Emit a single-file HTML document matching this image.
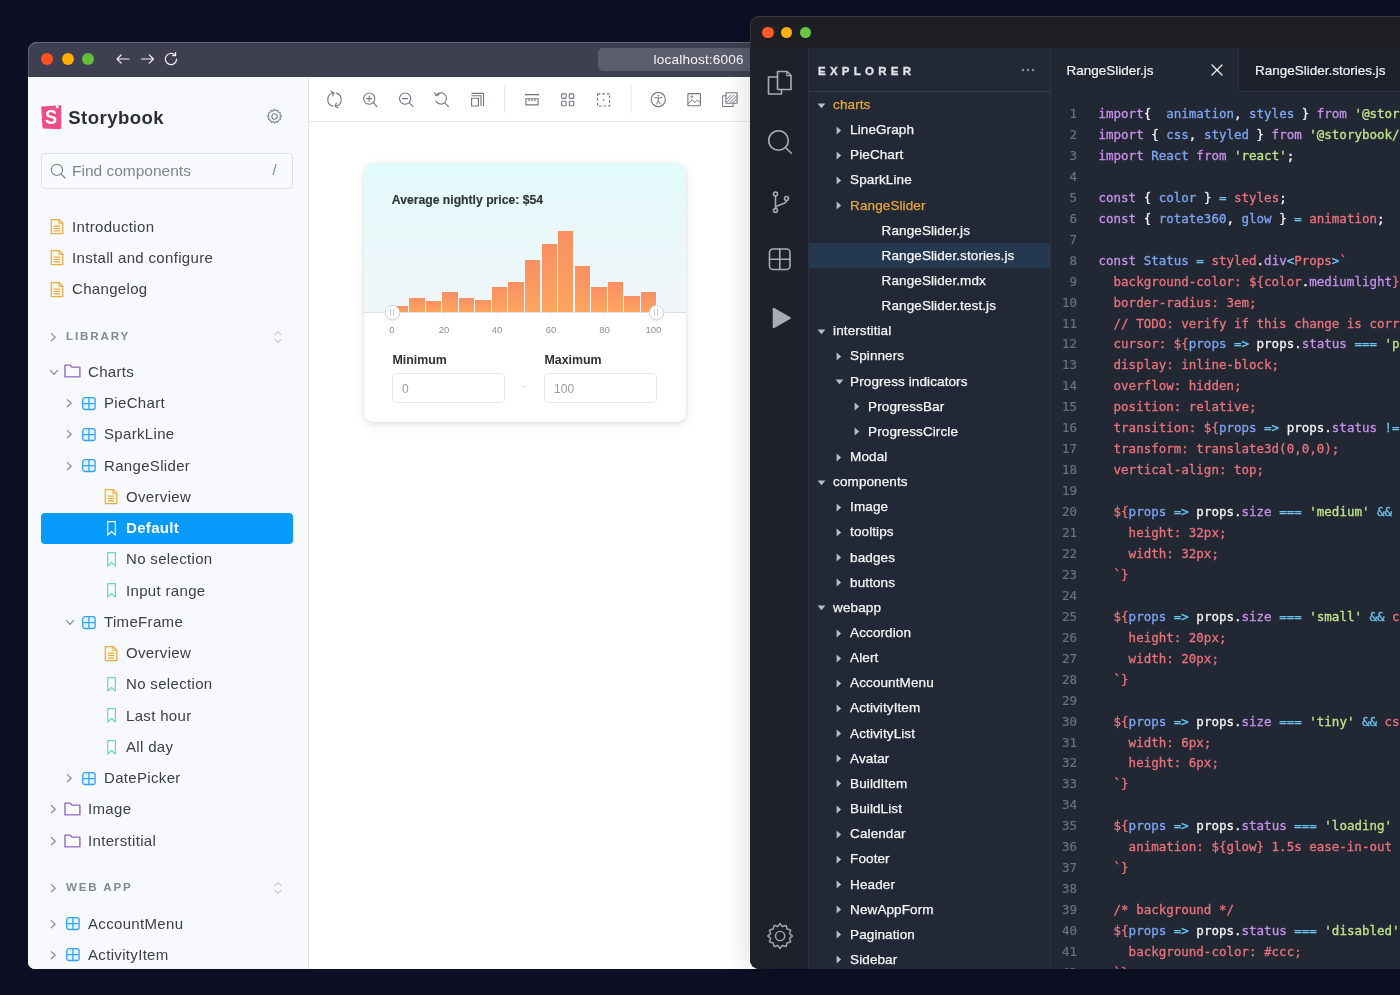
<!DOCTYPE html>
<html lang="en">
<head>
<meta charset="utf-8">
<title>Storybook and editor</title>
<style>
html,body{margin:0;padding:0}
body{width:1400px;height:995px;background:#0d0f24;overflow:hidden;position:relative;font-family:"Liberation Sans",sans-serif;-webkit-font-smoothing:antialiased}
#root{position:absolute;left:0;top:0;width:1400px;height:995px;overflow:hidden;will-change:transform}
.ic{position:absolute;display:block;overflow:visible}
/* ---------- Storybook window ---------- */
#sb{position:absolute;left:27.8px;top:41.6px;width:760px;height:927.2px;border-radius:9px 0 0 7px;overflow:hidden;background:#fff}
#sb .bar{position:absolute;left:0;top:0;right:0;height:35.3px;background:#3e3f51;border-top-left-radius:9px;box-shadow:inset 0 1px 0 #65667a,inset 1px 0 0 #5c5d70}
.dot{position:absolute;width:12px;height:12px;border-radius:50%}
#sb .url{position:absolute;left:569.8px;top:6.5px;width:200px;height:23px;border-radius:5px;background:#5c5d6d}
#sb .url span{position:absolute;left:56px;top:.4px;line-height:23px;font-size:13.6px;letter-spacing:.18px;color:#f4f4f7;white-space:pre}
#side{position:absolute;left:0;top:35.3px;width:280.2px;bottom:0;background:#f7f9fc;border-right:1px solid #dfe4ea}
#main{position:absolute;left:281.2px;top:35.3px;right:0;bottom:0;background:#fff}
#tools{position:absolute;left:0;top:0;right:0;height:44px;border-bottom:1px solid #e4e6e9}
.lbl{position:absolute;height:24px;line-height:24px;font-size:15px;letter-spacing:.33px;color:#3b4147;white-space:pre}
.lbl.b{font-weight:bold}
.lbl.w{color:#fff}
.lbl.hd{font-size:11.6px;font-weight:bold;letter-spacing:1.85px;color:#808b95}
.sel{position:absolute;width:252px;height:31px;border-radius:4px;background:#069bfb}
#brand{position:absolute;left:40.5px;top:61.7px;height:30px;line-height:30px;font-size:18.6px;letter-spacing:.42px;font-weight:bold;color:#2b2f36;white-space:pre}
#search{position:absolute;left:13.2px;top:111.6px;width:250px;height:33.6px;border:1px solid #dbe2e9;border-radius:4px;background:#f8fafd}
#search span{position:absolute;top:0;line-height:33px;font-size:15.5px;color:#7a8790;white-space:pre}
/* ---------- card ---------- */
#card{position:absolute;left:363.7px;top:162.6px;width:322.5px;height:259.4px;border-radius:9px;background:#fff;box-shadow:0 1px 4px rgba(0,0,0,.09),0 3px 12px rgba(0,0,0,.08);overflow:hidden}
#card .sky{position:absolute;left:0;top:0;right:0;height:149.6px;background:linear-gradient(#e2fbfa,#eaf8fa 45%,#f0f6fa)}
#card .axis{position:absolute;left:0;right:0;top:149.4px;height:1.5px;background:#dcdfe3}
#card .t{position:absolute;white-space:pre}
.bar2{position:absolute;width:15.4px;background:linear-gradient(#f98f62,#fda55f)}
.knob{position:absolute;width:13px;height:13px;border-radius:50%;background:#fff;border:1px solid #d5d8dc;box-shadow:0 1px 2px rgba(0,0,0,.12)}
.knob i{position:absolute;top:3px;width:1px;height:7px;background:#c8ccd1}
.inp{position:absolute;top:210.2px;width:111px;height:28.6px;border:1px solid #e4e6e9;border-radius:4px;background:#fff}
/* ---------- VS Code window ---------- */
#vs{position:absolute;left:749.5px;top:16px;width:660px;height:952.5px;border-radius:9px 0 0 9px;overflow:hidden;background:#222734;box-shadow:0 0 30px rgba(0,0,0,.16)}
#vs .bar{position:absolute;left:0;top:0;right:0;height:32px;background:#1e1f25;border-top-left-radius:9px;box-shadow:inset 0 1px 0 #3a3b42,inset 1px 0 0 #303138}
#act{position:absolute;left:0;top:32px;width:58px;bottom:0;background:#1d212c;border-right:1px solid #2c313e}
#exp{position:absolute;left:59px;top:32px;width:241px;bottom:0;background:#222835;border-right:1px solid #2e3442}
#exph{position:absolute;left:59px;top:32px;width:241px;height:44px;border-bottom:1px solid #343a48;box-sizing:border-box}
#exph span{position:absolute;left:9.5px;top:11.5px;line-height:22px;font-size:11.5px;font-weight:bold;letter-spacing:4.25px;color:#e1e3e7;white-space:pre;-webkit-text-stroke:.3px}
.vl{position:absolute;height:24px;line-height:24px;font-size:13.5px;letter-spacing:.1px;color:#f6f7f9;white-space:pre;-webkit-text-stroke:.25px}
.vl.yl{color:#e8a838}
.vsel{position:absolute;left:59px;width:241px;height:25.2px;background:#24384f}
#tabs{position:absolute;left:301px;top:32px;right:0;height:44px;background:#1d212b}
#tab1{position:absolute;left:0;top:0;width:187px;height:44px;background:#222734;border-right:1px solid #2d313c}
#tabs .tt{position:absolute;top:11.5px;line-height:22px;font-size:13.5px;color:#f1f2f4;white-space:pre;-webkit-text-stroke:.2px}
#tabline{position:absolute;left:188px;right:0;bottom:0;height:1px;background:#2f3441}
.ln{position:absolute;left:300.5px;width:27px;text-align:right;height:20px;line-height:20px;font:12.5px "DejaVu Sans Mono","Liberation Mono",monospace;color:#69727f;-webkit-text-stroke:.2px}
.cl{position:absolute;left:349px;height:20px;line-height:20px;font:12.5px "DejaVu Sans Mono","Liberation Mono",monospace;white-space:pre;color:#e9ebee;-webkit-text-stroke:.3px}
.ln,.cl{line-height:20px}
.k{color:#c792ea}.w{color:#f4f5f7}.b{color:#7ea6f4}.g{color:#c0e38a}.r{color:#ea737c}.c{color:#6cc6ee}
</style>
</head>
<body>
<div id="root">

<!-- ================= Storybook browser window ================= -->
<div id="sb">
  <div class="bar">
    <div class="dot" style="left:13.2px;top:11.6px;background:#fc521f"></div>
    <div class="dot" style="left:34.4px;top:11.6px;background:#ffae00"></div>
    <div class="dot" style="left:54.3px;top:11.6px;background:#66bf3c"></div>
    <svg class="ic" width="64" height="16" viewBox="0 0 64 16" style="left:87.2px;top:9.9px" fill="none" stroke="#f2f2f5" stroke-width="1.2" stroke-linecap="round" stroke-linejoin="round">
      <path d="M14 8H2M6.2 3.8L2 8l4.2 4.2"/>
      <path d="M26.5 8h12M34.3 3.8L38.5 8l-4.2 4.2"/>
      <path d="M61.6 8a5.6 5.6 0 1 1-1.7-4"/><path d="M60.6 1.6v3h-3"/>
    </svg>
    <div class="url"><span>localhost:6006</span></div>
  </div>
  <div id="side">
    <svg class="ic" width="21" height="25" viewBox="0 0 21 25" style="left:12.8px;top:27.9px">
      <path d="M1.2 1.4L19 0.3c.7 0 1.2.5 1.2 1.2v21.6c0 .7-.6 1.2-1.3 1.2L2.6 23.6c-.6 0-1.1-.5-1.1-1.1L.2 2.5c0-.6.4-1.1 1-1.1z" fill="#ef4c8a"/>
      <path d="M15 .5l2.5-.2v3.3l-1.3-.9-1.3 1z" fill="#fff"/>
    </svg>
    <div style="position:absolute;left:15px;top:28.3px;width:16px;height:24px;line-height:24px;text-align:center;font-size:20.5px;font-weight:bold;color:#fff;transform:scaleX(.88)">S</div>
    <svg class="ic" width="17" height="17" viewBox="0 0 17 17" style="left:238.5px;top:31.5px" fill="none" stroke="#7d8790" stroke-width="1.1">
      <path d="M8.5 1.2l1.3 1.6 2-.6.7 2 2 .7-.6 2 1.6 1.3-1.6 1.3.6 2-2 .7-.7 2-2-.6-1.3 1.6-1.3-1.6-2 .6-.7-2-2-.7.6-2L1.2 8.5l1.6-1.3-.6-2 2-.7.7-2 2 .6z" stroke-linejoin="round"/>
      <circle cx="8.5" cy="8.5" r="2.7"/>
    </svg>
  </div>
  <div id="brand">Storybook</div>
  <div id="search">
    <svg class="ic" width="16" height="16" viewBox="0 0 16 16" style="left:7.6px;top:9.2px" fill="none" stroke="#7f8b94" stroke-width="1.2" stroke-linecap="round"><circle cx="6.9" cy="6.9" r="5.6"/><path d="M11 11l4 4"/></svg>
    <span style="left:30px">Find components</span>
    <span style="left:230.5px;font-size:14.5px">/</span>
  </div>
<svg class="ic" width="14" height="17" viewBox="0 0 14 17" style="left:22.0px;top:176.6px"><path d="M1.3 1.5h7.9l3.6 3.6v10.6h-11.5z" fill="#fff6e2" stroke="#e6ad4b" stroke-width="1.25" stroke-linejoin="round"/><path d="M9 1.7v3.6h3.6" fill="none" stroke="#e6ad4b" stroke-width="1.1"/><path d="M3.9 8.1h6.3M3.9 10.5h6.3M3.9 12.9h6.3" stroke="#e6ad4b" stroke-width="1.1"/></svg><div class="lbl" style="left:44.2px;top:173.1px;">Introduction</div>
<svg class="ic" width="14" height="17" viewBox="0 0 14 17" style="left:22.0px;top:207.9px"><path d="M1.3 1.5h7.9l3.6 3.6v10.6h-11.5z" fill="#fff6e2" stroke="#e6ad4b" stroke-width="1.25" stroke-linejoin="round"/><path d="M9 1.7v3.6h3.6" fill="none" stroke="#e6ad4b" stroke-width="1.1"/><path d="M3.9 8.1h6.3M3.9 10.5h6.3M3.9 12.9h6.3" stroke="#e6ad4b" stroke-width="1.1"/></svg><div class="lbl" style="left:44.2px;top:204.4px;">Install and configure</div>
<svg class="ic" width="14" height="17" viewBox="0 0 14 17" style="left:22.0px;top:239.2px"><path d="M1.3 1.5h7.9l3.6 3.6v10.6h-11.5z" fill="#fff6e2" stroke="#e6ad4b" stroke-width="1.25" stroke-linejoin="round"/><path d="M9 1.7v3.6h3.6" fill="none" stroke="#e6ad4b" stroke-width="1.1"/><path d="M3.9 8.1h6.3M3.9 10.5h6.3M3.9 12.9h6.3" stroke="#e6ad4b" stroke-width="1.1"/></svg><div class="lbl" style="left:44.2px;top:235.7px;">Changelog</div>
<svg class="ic" width="7" height="10" viewBox="0 0 7 10" style="left:22.7px;top:290.1px"><path d="M1.3 1.6l3.9 3.6-3.9 3.6" fill="none" stroke="#8a96a0" stroke-width="1.2" stroke-linecap="round" stroke-linejoin="round"/></svg><div class="lbl hd" style="left:38.2px;top:282.2px;">LIBRARY</div><svg class="ic" width="8" height="14" viewBox="0 0 8 14" style="left:246.2px;top:288.1px"><path d="M1 4.6l3-3 3 3M1 9.4l3 3 3-3" fill="none" stroke="#c3cdd6" stroke-width="1.2" stroke-linecap="round" stroke-linejoin="round"/></svg>
<svg class="ic" width="10" height="7" viewBox="0 0 10 7" style="left:21.7px;top:327.2px"><path d="M1.4 1.4l3.6 3.9 3.6-3.9" fill="none" stroke="#838d96" stroke-width="1.2" stroke-linecap="round" stroke-linejoin="round"/></svg><svg class="ic" width="17" height="14" viewBox="0 0 17 14" style="left:36.7px;top:322.9px"><path d="M1 1.1h5.2l1.6 2h8.1v9.8h-14.9z" fill="none" stroke="#8f6ac2" stroke-width="1.4" stroke-linejoin="round"/></svg><div class="lbl" style="left:60.2px;top:318.1px;">Charts</div>
<svg class="ic" width="7" height="10" viewBox="0 0 7 10" style="left:38.4px;top:356.37px"><path d="M1.3 1.6l3.9 3.6-3.9 3.6" fill="none" stroke="#838d96" stroke-width="1.2" stroke-linecap="round" stroke-linejoin="round"/></svg><svg class="ic" width="14" height="14" viewBox="0 0 14 14" style="left:54.1px;top:355.07px"><rect x="0.7" y="0.7" width="12.4" height="11.8" rx="2.2" fill="#e3f3fd" stroke="#35a5ea" stroke-width="1.3"/><path d="M6.9 1v11.2M1 6.6h11.8" stroke="#35a5ea" stroke-width="1.3"/></svg><div class="lbl" style="left:76.2px;top:349.37px;">PieChart</div>
<svg class="ic" width="7" height="10" viewBox="0 0 7 10" style="left:38.4px;top:387.64px"><path d="M1.3 1.6l3.9 3.6-3.9 3.6" fill="none" stroke="#838d96" stroke-width="1.2" stroke-linecap="round" stroke-linejoin="round"/></svg><svg class="ic" width="14" height="14" viewBox="0 0 14 14" style="left:54.1px;top:386.34px"><rect x="0.7" y="0.7" width="12.4" height="11.8" rx="2.2" fill="#e3f3fd" stroke="#35a5ea" stroke-width="1.3"/><path d="M6.9 1v11.2M1 6.6h11.8" stroke="#35a5ea" stroke-width="1.3"/></svg><div class="lbl" style="left:76.2px;top:380.64px;">SparkLine</div>
<svg class="ic" width="7" height="10" viewBox="0 0 7 10" style="left:38.4px;top:418.91px"><path d="M1.3 1.6l3.9 3.6-3.9 3.6" fill="none" stroke="#838d96" stroke-width="1.2" stroke-linecap="round" stroke-linejoin="round"/></svg><svg class="ic" width="14" height="14" viewBox="0 0 14 14" style="left:54.1px;top:417.61px"><rect x="0.7" y="0.7" width="12.4" height="11.8" rx="2.2" fill="#e3f3fd" stroke="#35a5ea" stroke-width="1.3"/><path d="M6.9 1v11.2M1 6.6h11.8" stroke="#35a5ea" stroke-width="1.3"/></svg><div class="lbl" style="left:76.2px;top:411.91px;">RangeSlider</div>
<svg class="ic" width="14" height="17" viewBox="0 0 14 17" style="left:76.6px;top:446.68px"><path d="M1.3 1.5h7.9l3.6 3.6v10.6h-11.5z" fill="#fff6e2" stroke="#e6ad4b" stroke-width="1.25" stroke-linejoin="round"/><path d="M9 1.7v3.6h3.6" fill="none" stroke="#e6ad4b" stroke-width="1.1"/><path d="M3.9 8.1h6.3M3.9 10.5h6.3M3.9 12.9h6.3" stroke="#e6ad4b" stroke-width="1.1"/></svg><div class="lbl" style="left:98.2px;top:443.18px;">Overview</div>
<div class="sel" style="left:13.2px;top:471.15px"></div><svg class="ic" width="11" height="16" viewBox="0 0 11 16" style="left:78.3px;top:478.15px"><path d="M1.7 1.7h7.7v13.4l-3.85-3.6-3.85 3.6z" fill="none" stroke="#ffffff" stroke-width="1.2" stroke-linejoin="round"/></svg><div class="lbl b w" style="left:98.2px;top:474.45px;">Default</div>
<svg class="ic" width="11" height="16" viewBox="0 0 11 16" style="left:78.3px;top:509.42px"><path d="M1.7 1.7h7.7v13.4l-3.85-3.6-3.85 3.6z" fill="none" stroke="#67d4d0" stroke-width="1.2" stroke-linejoin="round"/></svg><div class="lbl" style="left:98.2px;top:505.72px;">No selection</div>
<svg class="ic" width="11" height="16" viewBox="0 0 11 16" style="left:78.3px;top:540.69px"><path d="M1.7 1.7h7.7v13.4l-3.85-3.6-3.85 3.6z" fill="none" stroke="#67d4d0" stroke-width="1.2" stroke-linejoin="round"/></svg><div class="lbl" style="left:98.2px;top:536.99px;">Input range</div>
<svg class="ic" width="10" height="7" viewBox="0 0 10 7" style="left:37.7px;top:577.36px"><path d="M1.4 1.4l3.6 3.9 3.6-3.9" fill="none" stroke="#838d96" stroke-width="1.2" stroke-linecap="round" stroke-linejoin="round"/></svg><svg class="ic" width="14" height="14" viewBox="0 0 14 14" style="left:54.1px;top:573.96px"><rect x="0.7" y="0.7" width="12.4" height="11.8" rx="2.2" fill="#e3f3fd" stroke="#35a5ea" stroke-width="1.3"/><path d="M6.9 1v11.2M1 6.6h11.8" stroke="#35a5ea" stroke-width="1.3"/></svg><div class="lbl" style="left:76.2px;top:568.26px;">TimeFrame</div>
<svg class="ic" width="14" height="17" viewBox="0 0 14 17" style="left:76.6px;top:603.03px"><path d="M1.3 1.5h7.9l3.6 3.6v10.6h-11.5z" fill="#fff6e2" stroke="#e6ad4b" stroke-width="1.25" stroke-linejoin="round"/><path d="M9 1.7v3.6h3.6" fill="none" stroke="#e6ad4b" stroke-width="1.1"/><path d="M3.9 8.1h6.3M3.9 10.5h6.3M3.9 12.9h6.3" stroke="#e6ad4b" stroke-width="1.1"/></svg><div class="lbl" style="left:98.2px;top:599.53px;">Overview</div>
<svg class="ic" width="11" height="16" viewBox="0 0 11 16" style="left:78.3px;top:634.5px"><path d="M1.7 1.7h7.7v13.4l-3.85-3.6-3.85 3.6z" fill="none" stroke="#67d4d0" stroke-width="1.2" stroke-linejoin="round"/></svg><div class="lbl" style="left:98.2px;top:630.8px;">No selection</div>
<svg class="ic" width="11" height="16" viewBox="0 0 11 16" style="left:78.3px;top:665.77px"><path d="M1.7 1.7h7.7v13.4l-3.85-3.6-3.85 3.6z" fill="none" stroke="#67d4d0" stroke-width="1.2" stroke-linejoin="round"/></svg><div class="lbl" style="left:98.2px;top:662.07px;">Last hour</div>
<svg class="ic" width="11" height="16" viewBox="0 0 11 16" style="left:78.3px;top:697.04px"><path d="M1.7 1.7h7.7v13.4l-3.85-3.6-3.85 3.6z" fill="none" stroke="#67d4d0" stroke-width="1.2" stroke-linejoin="round"/></svg><div class="lbl" style="left:98.2px;top:693.34px;">All day</div>
<svg class="ic" width="7" height="10" viewBox="0 0 7 10" style="left:38.4px;top:731.61px"><path d="M1.3 1.6l3.9 3.6-3.9 3.6" fill="none" stroke="#838d96" stroke-width="1.2" stroke-linecap="round" stroke-linejoin="round"/></svg><svg class="ic" width="14" height="14" viewBox="0 0 14 14" style="left:54.1px;top:730.31px"><rect x="0.7" y="0.7" width="12.4" height="11.8" rx="2.2" fill="#e3f3fd" stroke="#35a5ea" stroke-width="1.3"/><path d="M6.9 1v11.2M1 6.6h11.8" stroke="#35a5ea" stroke-width="1.3"/></svg><div class="lbl" style="left:76.2px;top:724.61px;">DatePicker</div>
<svg class="ic" width="7" height="10" viewBox="0 0 7 10" style="left:22.4px;top:762.88px"><path d="M1.3 1.6l3.9 3.6-3.9 3.6" fill="none" stroke="#838d96" stroke-width="1.2" stroke-linecap="round" stroke-linejoin="round"/></svg><svg class="ic" width="17" height="14" viewBox="0 0 17 14" style="left:36.7px;top:760.68px"><path d="M1 1.1h5.2l1.6 2h8.1v9.8h-14.9z" fill="none" stroke="#8f6ac2" stroke-width="1.4" stroke-linejoin="round"/></svg><div class="lbl" style="left:60.2px;top:755.88px;">Image</div>
<svg class="ic" width="7" height="10" viewBox="0 0 7 10" style="left:22.4px;top:794.15px"><path d="M1.3 1.6l3.9 3.6-3.9 3.6" fill="none" stroke="#838d96" stroke-width="1.2" stroke-linecap="round" stroke-linejoin="round"/></svg><svg class="ic" width="17" height="14" viewBox="0 0 17 14" style="left:36.7px;top:791.95px"><path d="M1 1.1h5.2l1.6 2h8.1v9.8h-14.9z" fill="none" stroke="#8f6ac2" stroke-width="1.4" stroke-linejoin="round"/></svg><div class="lbl" style="left:60.2px;top:787.15px;">Interstitial</div>
<svg class="ic" width="7" height="10" viewBox="0 0 7 10" style="left:22.7px;top:841.8px"><path d="M1.3 1.6l3.9 3.6-3.9 3.6" fill="none" stroke="#8a96a0" stroke-width="1.2" stroke-linecap="round" stroke-linejoin="round"/></svg><div class="lbl hd" style="left:38.2px;top:833.9px;">WEB APP</div><svg class="ic" width="8" height="14" viewBox="0 0 8 14" style="left:246.2px;top:839.8px"><path d="M1 4.6l3-3 3 3M1 9.4l3 3 3-3" fill="none" stroke="#c3cdd6" stroke-width="1.2" stroke-linecap="round" stroke-linejoin="round"/></svg>
<svg class="ic" width="7" height="10" viewBox="0 0 7 10" style="left:22.4px;top:877.0px"><path d="M1.3 1.6l3.9 3.6-3.9 3.6" fill="none" stroke="#838d96" stroke-width="1.2" stroke-linecap="round" stroke-linejoin="round"/></svg><svg class="ic" width="14" height="14" viewBox="0 0 14 14" style="left:38.1px;top:875.7px"><rect x="0.7" y="0.7" width="12.4" height="11.8" rx="2.2" fill="#e3f3fd" stroke="#35a5ea" stroke-width="1.3"/><path d="M6.9 1v11.2M1 6.6h11.8" stroke="#35a5ea" stroke-width="1.3"/></svg><div class="lbl" style="left:60.2px;top:870.0px;">AccountMenu</div>
<svg class="ic" width="7" height="10" viewBox="0 0 7 10" style="left:22.4px;top:908.2px"><path d="M1.3 1.6l3.9 3.6-3.9 3.6" fill="none" stroke="#838d96" stroke-width="1.2" stroke-linecap="round" stroke-linejoin="round"/></svg><svg class="ic" width="14" height="14" viewBox="0 0 14 14" style="left:38.1px;top:906.9px"><rect x="0.7" y="0.7" width="12.4" height="11.8" rx="2.2" fill="#e3f3fd" stroke="#35a5ea" stroke-width="1.3"/><path d="M6.9 1v11.2M1 6.6h11.8" stroke="#35a5ea" stroke-width="1.3"/></svg><div class="lbl" style="left:60.2px;top:901.2px;">ActivityItem</div>
  <div id="main">
    <div id="tools">
      <svg class="ic" width="440" height="44" viewBox="309 77 440 44" style="left:0;top:0" fill="none" stroke="#737a82" stroke-width="1.15" stroke-linecap="round" stroke-linejoin="round">
        <path d="M332.77 106.07A6.7 6.7 0 0 1 333.57 92.97M336.23 93.13A6.7 6.7 0 0 1 335.43 106.23"/><path d="M330.96999999999997 91.37l3 1.5-1.3 3M338.03000000000003 107.83l-3-1.5 1.3-3"/>
        <circle cx="369.2" cy="98.6" r="5.6"/><path d="M373.3 102.7l3.6 3.9M366.6 98.6h5.2M369.2 96v5.2"/>
        <circle cx="405.1" cy="98.6" r="5.6"/><path d="M409.2 102.7l3.7 4M402.5 98.6h5.2"/>
        <path d="M436.3 95.2a5.6 5.6 0 1 1-.3 6"/><path d="M434.6 92.8l1.5 2.8 2.9-1M444.7 102.7l3.7 3.9"/>
        <path d="M471.5 93.4h12v12.7M471.5 95.7h9.5v10.4M471.6 98.2h6.8v7.8h-6.8z" stroke-linecap="butt" stroke-linejoin="miter"/>
        <path d="M504.7 86v26" stroke="#e3e5e8" stroke-width="1"/>
        <path d="M525.8 94.6h12.4M525.8 93.5v2.2M538.2 93.5v2.2M525.9 98.7h12.2v6.2h-12.2zM529 98.9v2.4M532 98.9v2.4M535 98.9v2.4" stroke-linecap="butt" stroke-linejoin="miter"/>
        <rect x="561.6" y="93.8" width="4.5" height="4.5" rx=".8"/><rect x="569.3" y="93.8" width="4.5" height="4.5" rx=".8"/><rect x="561.6" y="101.2" width="4.5" height="4.5" rx=".8"/><rect x="569.3" y="101.2" width="4.5" height="4.5" rx=".8"/>
        <rect x="597.6" y="93.8" width="12" height="12.2" stroke-dasharray="2.7 1.9" stroke-linecap="butt"/><circle cx="603.6" cy="99.8" r=".85" fill="#737a82" stroke="none"/>
        <path d="M631 86v26" stroke="#e3e5e8" stroke-width="1"/>
        <circle cx="658.3" cy="99.5" r="7.1"/><circle cx="658.3" cy="95.7" r=".9" fill="#737a82" stroke="none"/><path d="M654.8 97.5l3.5.6 3.5-.6M658.3 98.1v2.7M656.5 104l1.8-3.2 1.8 3.2" stroke-width="1"/>
        <rect x="687.9" y="93.6" width="12.5" height="12.2" rx=".6"/><path d="M688 103.7l4.1-4 2.7 2.6 2.7-2.3 2.8 2.6" stroke-width="1"/><circle cx="691.7" cy="96.7" r=".9" stroke-width=".9"/>
        <rect x="725.9" y="92.7" width="11.2" height="10.6" rx=".5"/><path d="M725.8 95.8h-3.2v10.7h10.6v-3.1M727.4 101.6l6.4-6.6M730.2 102.3l6-6.2M727 98.8l3.7-3.8M733.2 102.5l3-3.1" stroke-width="1"/>
      </svg>
    </div>
  </div>
</div>

<!-- ================= Chart card ================= -->
<div id="card">
  <div class="sky"></div>
  <div class="t" style="left:28.1px;top:27.4px;line-height:20px;font-size:12.2px;font-weight:bold;color:#2f3438;-webkit-text-stroke:.15px">Average nightly price: $54</div>
  <div class="bar2" style="left:28.9px;top:143.3px;height:6.3px"></div>
<div class="bar2" style="left:45.45px;top:135.7px;height:13.9px"></div>
<div class="bar2" style="left:62.0px;top:138.7px;height:10.9px"></div>
<div class="bar2" style="left:78.55px;top:129.1px;height:20.5px"></div>
<div class="bar2" style="left:95.1px;top:135.7px;height:13.9px"></div>
<div class="bar2" style="left:111.65px;top:137.2px;height:12.4px"></div>
<div class="bar2" style="left:128.2px;top:124.9px;height:24.7px"></div>
<div class="bar2" style="left:144.75px;top:119.4px;height:30.2px"></div>
<div class="bar2" style="left:161.3px;top:97.7px;height:51.9px"></div>
<div class="bar2" style="left:177.85px;top:81.7px;height:67.9px"></div>
<div class="bar2" style="left:194.4px;top:68.2px;height:81.4px"></div>
<div class="bar2" style="left:210.95px;top:103.5px;height:46.1px"></div>
<div class="bar2" style="left:227.5px;top:124.9px;height:24.7px"></div>
<div class="bar2" style="left:244.05px;top:119.4px;height:30.2px"></div>
<div class="bar2" style="left:260.6px;top:133.3px;height:16.3px"></div>
<div class="bar2" style="left:277.15px;top:129.1px;height:20.5px"></div>
<div class="t" style="left:13.3px;width:30px;text-align:center;top:157.9px;line-height:20px;font-size:9.5px;color:#8c9196">0</div>
<div class="t" style="left:65.3px;width:30px;text-align:center;top:157.9px;line-height:20px;font-size:9.5px;color:#8c9196">20</div>
<div class="t" style="left:118.3px;width:30px;text-align:center;top:157.9px;line-height:20px;font-size:9.5px;color:#8c9196">40</div>
<div class="t" style="left:172.3px;width:30px;text-align:center;top:157.9px;line-height:20px;font-size:9.5px;color:#8c9196">60</div>
<div class="t" style="left:225.8px;width:30px;text-align:center;top:157.9px;line-height:20px;font-size:9.5px;color:#8c9196">80</div>
<div class="t" style="left:274.8px;width:30px;text-align:center;top:157.9px;line-height:20px;font-size:9.5px;color:#8c9196">100</div>
<div style="position:absolute;left:27.8px;top:153.9px;width:1px;height:3px;background:#e9ebee"></div>
<div style="position:absolute;left:80.3px;top:153.9px;width:1px;height:3px;background:#e9ebee"></div>
<div style="position:absolute;left:133.3px;top:153.9px;width:1px;height:3px;background:#e9ebee"></div>
<div style="position:absolute;left:186.8px;top:153.9px;width:1px;height:3px;background:#e9ebee"></div>
<div style="position:absolute;left:240.3px;top:153.9px;width:1px;height:3px;background:#e9ebee"></div>
<div style="position:absolute;left:291.8px;top:153.9px;width:1px;height:3px;background:#e9ebee"></div>
  <div class="axis"></div>
  <div class="t" style="left:28.8px;top:187.6px;line-height:20px;font-size:12.4px;font-weight:bold;color:#2e3236">Minimum</div>
  <div class="t" style="left:180.8px;top:187.6px;line-height:20px;font-size:12.4px;font-weight:bold;color:#2e3236">Maximum</div>
  <div class="inp" style="left:28.8px"><div class="t" style="left:8.6px;top:4.8px;line-height:20px;font-size:12px;color:#9a9ea3">0</div></div>
  <div class="inp" style="left:180.8px"><div class="t" style="left:8.6px;top:4.8px;line-height:20px;font-size:12px;color:#9a9ea3">100</div></div>
  <div class="t" style="left:158.8px;top:213.4px;line-height:20px;font-size:12px;color:#d9dbde">-</div>
</div>
<div class="knob" style="left:384.6px;top:305px"><i style="left:4.5px"></i><i style="left:7.5px"></i></div>
<div class="knob" style="left:648.6px;top:305px"><i style="left:4.5px"></i><i style="left:7.5px"></i></div>

<!-- ================= VS Code window ================= -->
<div id="vs">
  <div class="bar">
    <div class="dot" style="left:12.5px;top:10.6px;width:11.6px;height:11.6px;background:#fc5a2a"></div>
    <div class="dot" style="left:31.4px;top:10.6px;width:11.6px;height:11.6px;background:#ffb112"></div>
    <div class="dot" style="left:50.1px;top:10.6px;width:11.6px;height:11.6px;background:#6cc644"></div>
  </div>
  <div id="act">
    <svg class="ic" width="58" height="920" viewBox="0 0 58 920" style="left:0;top:.7px" fill="none" stroke="#a9acb2" stroke-width="1.6" stroke-linejoin="round" stroke-linecap="round">
      <!-- files -->
      <path d="M27.5 22.5h9.5l4 4v14h-13.5z"/><path d="M36.8 22.7v4h4" stroke-width="1.2"/><path d="M27.5 28h-9v17h13v-4.5"/>
      <!-- search -->
      <circle cx="28.5" cy="91.5" r="9.8"/><path d="M35.5 98.5l5.8 5.8"/>
      <!-- git -->
      <circle cx="25.5" cy="145" r="2"/><circle cx="25.5" cy="161.5" r="2"/><circle cx="36.5" cy="149.5" r="2"/><path d="M25.5 147v12.5M36.5 151.5c0 5-11 3-11 8"/>
      <!-- ext -->
      <rect x="19.5" y="200" width="20.5" height="20.5" rx="3.5"/><path d="M29.75 200v20.5M19.5 210.25h20.5"/>
      <!-- play -->
      <path d="M23.5 259.5v19l16.5-9.5z" fill="#a9acb2"/>
      <!-- gear -->
      <path d="M30.1 874.6l2.3 2.9 3.6-1.1 1.1 3.6 3.6 1.1-1.1 3.6 2.9 2.3-2.9 2.3 1.1 3.6-3.6 1.1-1.1 3.6-3.6-1.1-2.3 2.9-2.3-2.9-3.6 1.1-1.1-3.6-3.6-1.1 1.1-3.6-2.9-2.3 2.9-2.3-1.1-3.6 3.6-1.1 1.1-3.6 3.6 1.1z" stroke-width="1.4"/><circle cx="30.1" cy="887" r="4.6" stroke-width="1.4"/>
    </svg>
  </div>
  <div id="exp"></div>
  <div id="exph"><span>EXPLORER</span>
    <svg class="ic" width="14" height="4" viewBox="0 0 14 4" style="left:212px;top:20px" fill="#8a8f99"><circle cx="2" cy="2" r="1.2"/><circle cx="7" cy="2" r="1.2"/><circle cx="12" cy="2" r="1.2"/></svg>
  </div>
<svg class="ic" width="9" height="6" viewBox="0 0 9 6" style="left:67.7px;top:86.5px"><path d="M0.6 0.6h7.8l-3.9 4.6z" fill="#b9bcc2"/></svg><div class="vl yl" style="left:83.6px;top:77.0px">charts</div>
<svg class="ic" width="6" height="9" viewBox="0 0 6 9" style="left:86.8px;top:109.65px"><path d="M0.6 0.6l4.6 3.9-4.6 3.9z" fill="#b9bcc2"/></svg><div class="vl" style="left:100.6px;top:102.15px">LineGraph</div>
<svg class="ic" width="6" height="9" viewBox="0 0 6 9" style="left:86.8px;top:134.79px"><path d="M0.6 0.6l4.6 3.9-4.6 3.9z" fill="#b9bcc2"/></svg><div class="vl" style="left:100.6px;top:127.29px">PieChart</div>
<svg class="ic" width="6" height="9" viewBox="0 0 6 9" style="left:86.8px;top:159.94px"><path d="M0.6 0.6l4.6 3.9-4.6 3.9z" fill="#b9bcc2"/></svg><div class="vl" style="left:100.6px;top:152.44px">SparkLine</div>
<svg class="ic" width="6" height="9" viewBox="0 0 6 9" style="left:86.8px;top:185.08px"><path d="M0.6 0.6l4.6 3.9-4.6 3.9z" fill="#b9bcc2"/></svg><div class="vl yl" style="left:100.6px;top:177.58px">RangeSlider</div>
<div class="vl" style="left:132.1px;top:202.72px">RangeSlider.js</div>
<div class="vsel" style="top:227.27px"></div><div class="vl" style="left:132.1px;top:227.87px">RangeSlider.stories.js</div>
<div class="vl" style="left:132.1px;top:253.01px">RangeSlider.mdx</div>
<div class="vl" style="left:132.1px;top:278.16px">RangeSlider.test.js</div>
<svg class="ic" width="9" height="6" viewBox="0 0 9 6" style="left:67.7px;top:312.81px"><path d="M0.6 0.6h7.8l-3.9 4.6z" fill="#b9bcc2"/></svg><div class="vl" style="left:83.6px;top:303.31px">interstitial</div>
<svg class="ic" width="6" height="9" viewBox="0 0 6 9" style="left:86.8px;top:335.95px"><path d="M0.6 0.6l4.6 3.9-4.6 3.9z" fill="#b9bcc2"/></svg><div class="vl" style="left:100.6px;top:328.45px">Spinners</div>
<svg class="ic" width="9" height="6" viewBox="0 0 9 6" style="left:85.3px;top:363.09px"><path d="M0.6 0.6h7.8l-3.9 4.6z" fill="#b9bcc2"/></svg><div class="vl" style="left:100.6px;top:353.59px">Progress indicators</div>
<svg class="ic" width="6" height="9" viewBox="0 0 6 9" style="left:104.8px;top:386.24px"><path d="M0.6 0.6l4.6 3.9-4.6 3.9z" fill="#b9bcc2"/></svg><div class="vl" style="left:118.6px;top:378.74px">ProgressBar</div>
<svg class="ic" width="6" height="9" viewBox="0 0 6 9" style="left:104.8px;top:411.38px"><path d="M0.6 0.6l4.6 3.9-4.6 3.9z" fill="#b9bcc2"/></svg><div class="vl" style="left:118.6px;top:403.88px">ProgressCircle</div>
<svg class="ic" width="6" height="9" viewBox="0 0 6 9" style="left:86.8px;top:436.53px"><path d="M0.6 0.6l4.6 3.9-4.6 3.9z" fill="#b9bcc2"/></svg><div class="vl" style="left:100.6px;top:429.03px">Modal</div>
<svg class="ic" width="9" height="6" viewBox="0 0 9 6" style="left:67.7px;top:463.68px"><path d="M0.6 0.6h7.8l-3.9 4.6z" fill="#b9bcc2"/></svg><div class="vl" style="left:83.6px;top:454.18px">components</div>
<svg class="ic" width="6" height="9" viewBox="0 0 6 9" style="left:86.8px;top:486.82px"><path d="M0.6 0.6l4.6 3.9-4.6 3.9z" fill="#b9bcc2"/></svg><div class="vl" style="left:100.6px;top:479.32px">Image</div>
<svg class="ic" width="6" height="9" viewBox="0 0 6 9" style="left:86.8px;top:511.96px"><path d="M0.6 0.6l4.6 3.9-4.6 3.9z" fill="#b9bcc2"/></svg><div class="vl" style="left:100.6px;top:504.46px">tooltips</div>
<svg class="ic" width="6" height="9" viewBox="0 0 6 9" style="left:86.8px;top:537.11px"><path d="M0.6 0.6l4.6 3.9-4.6 3.9z" fill="#b9bcc2"/></svg><div class="vl" style="left:100.6px;top:529.61px">badges</div>
<svg class="ic" width="6" height="9" viewBox="0 0 6 9" style="left:86.8px;top:562.25px"><path d="M0.6 0.6l4.6 3.9-4.6 3.9z" fill="#b9bcc2"/></svg><div class="vl" style="left:100.6px;top:554.75px">buttons</div>
<svg class="ic" width="9" height="6" viewBox="0 0 9 6" style="left:67.7px;top:589.4px"><path d="M0.6 0.6h7.8l-3.9 4.6z" fill="#b9bcc2"/></svg><div class="vl" style="left:83.6px;top:579.9px">webapp</div>
<svg class="ic" width="6" height="9" viewBox="0 0 6 9" style="left:86.8px;top:612.54px"><path d="M0.6 0.6l4.6 3.9-4.6 3.9z" fill="#b9bcc2"/></svg><div class="vl" style="left:100.6px;top:605.04px">Accordion</div>
<svg class="ic" width="6" height="9" viewBox="0 0 6 9" style="left:86.8px;top:637.69px"><path d="M0.6 0.6l4.6 3.9-4.6 3.9z" fill="#b9bcc2"/></svg><div class="vl" style="left:100.6px;top:630.19px">Alert</div>
<svg class="ic" width="6" height="9" viewBox="0 0 6 9" style="left:86.8px;top:662.84px"><path d="M0.6 0.6l4.6 3.9-4.6 3.9z" fill="#b9bcc2"/></svg><div class="vl" style="left:100.6px;top:655.34px">AccountMenu</div>
<svg class="ic" width="6" height="9" viewBox="0 0 6 9" style="left:86.8px;top:687.98px"><path d="M0.6 0.6l4.6 3.9-4.6 3.9z" fill="#b9bcc2"/></svg><div class="vl" style="left:100.6px;top:680.48px">ActivityItem</div>
<svg class="ic" width="6" height="9" viewBox="0 0 6 9" style="left:86.8px;top:713.12px"><path d="M0.6 0.6l4.6 3.9-4.6 3.9z" fill="#b9bcc2"/></svg><div class="vl" style="left:100.6px;top:705.62px">ActivityList</div>
<svg class="ic" width="6" height="9" viewBox="0 0 6 9" style="left:86.8px;top:738.27px"><path d="M0.6 0.6l4.6 3.9-4.6 3.9z" fill="#b9bcc2"/></svg><div class="vl" style="left:100.6px;top:730.77px">Avatar</div>
<svg class="ic" width="6" height="9" viewBox="0 0 6 9" style="left:86.8px;top:763.41px"><path d="M0.6 0.6l4.6 3.9-4.6 3.9z" fill="#b9bcc2"/></svg><div class="vl" style="left:100.6px;top:755.91px">BuildItem</div>
<svg class="ic" width="6" height="9" viewBox="0 0 6 9" style="left:86.8px;top:788.56px"><path d="M0.6 0.6l4.6 3.9-4.6 3.9z" fill="#b9bcc2"/></svg><div class="vl" style="left:100.6px;top:781.06px">BuildList</div>
<svg class="ic" width="6" height="9" viewBox="0 0 6 9" style="left:86.8px;top:813.71px"><path d="M0.6 0.6l4.6 3.9-4.6 3.9z" fill="#b9bcc2"/></svg><div class="vl" style="left:100.6px;top:806.21px">Calendar</div>
<svg class="ic" width="6" height="9" viewBox="0 0 6 9" style="left:86.8px;top:838.85px"><path d="M0.6 0.6l4.6 3.9-4.6 3.9z" fill="#b9bcc2"/></svg><div class="vl" style="left:100.6px;top:831.35px">Footer</div>
<svg class="ic" width="6" height="9" viewBox="0 0 6 9" style="left:86.8px;top:864.0px"><path d="M0.6 0.6l4.6 3.9-4.6 3.9z" fill="#b9bcc2"/></svg><div class="vl" style="left:100.6px;top:856.5px">Header</div>
<svg class="ic" width="6" height="9" viewBox="0 0 6 9" style="left:86.8px;top:889.14px"><path d="M0.6 0.6l4.6 3.9-4.6 3.9z" fill="#b9bcc2"/></svg><div class="vl" style="left:100.6px;top:881.64px">NewAppForm</div>
<svg class="ic" width="6" height="9" viewBox="0 0 6 9" style="left:86.8px;top:914.28px"><path d="M0.6 0.6l4.6 3.9-4.6 3.9z" fill="#b9bcc2"/></svg><div class="vl" style="left:100.6px;top:906.78px">Pagination</div>
<svg class="ic" width="6" height="9" viewBox="0 0 6 9" style="left:86.8px;top:939.43px"><path d="M0.6 0.6l4.6 3.9-4.6 3.9z" fill="#b9bcc2"/></svg><div class="vl" style="left:100.6px;top:931.93px">Sidebar</div>
  <div id="tabs">
    <div id="tab1"></div>
    <div id="tabline"></div>
    <div class="tt" style="left:16px">RangeSlider.js</div>
    <svg class="ic" width="12" height="12" viewBox="0 0 12 12" style="left:160px;top:16px" fill="none" stroke="#f0f1f3" stroke-width="1.3" stroke-linecap="round"><path d="M1 1l10 10M11 1L1 11"/></svg>
    <div class="tt" style="left:204.5px">RangeSlider.stories.js</div>
  </div>
<div class="ln" style="top:88.0px">1</div><div class="cl" style="top:88.0px"><span class="k">import</span><span class="w">{  </span><span class="b">animation</span><span class="w">, </span><span class="b">styles</span><span class="w"> } </span><span class="k">from</span><span class="w"> </span><span class="g">'@stor</span></div>
<div class="ln" style="top:108.95px">2</div><div class="cl" style="top:108.95px"><span class="k">import</span><span class="w"> { </span><span class="b">css</span><span class="w">, </span><span class="b">styled</span><span class="w"> } </span><span class="k">from</span><span class="w"> </span><span class="g">'@storybook/</span></div>
<div class="ln" style="top:129.9px">3</div><div class="cl" style="top:129.9px"><span class="k">import</span><span class="w"> </span><span class="b">React</span><span class="w"> </span><span class="k">from</span><span class="w"> </span><span class="g">'react'</span><span class="w">;</span></div>
<div class="ln" style="top:150.85px">4</div><div class="cl" style="top:150.85px"></div>
<div class="ln" style="top:171.8px">5</div><div class="cl" style="top:171.8px"><span class="k">const</span><span class="w"> { </span><span class="b">color</span><span class="w"> } </span><span class="c">=</span><span class="w"> </span><span class="r">styles</span><span class="w">;</span></div>
<div class="ln" style="top:192.75px">6</div><div class="cl" style="top:192.75px"><span class="k">const</span><span class="w"> { </span><span class="b">rotate360</span><span class="w">, </span><span class="b">glow</span><span class="w"> } </span><span class="c">=</span><span class="w"> </span><span class="r">animation</span><span class="w">;</span></div>
<div class="ln" style="top:213.7px">7</div><div class="cl" style="top:213.7px"></div>
<div class="ln" style="top:234.65px">8</div><div class="cl" style="top:234.65px"><span class="k">const</span><span class="w"> </span><span class="b">Status</span><span class="w"> </span><span class="c">=</span><span class="w"> </span><span class="r">styled</span><span class="w">.</span><span class="k">div</span><span class="c">&lt;</span><span class="r">Props</span><span class="c">&gt;</span><span class="r">`</span></div>
<div class="ln" style="top:255.6px">9</div><div class="cl" style="top:255.6px"><span class="r">  background-color: ${color</span><span class="w">.</span><span class="k">mediumlight</span><span class="r">}</span></div>
<div class="ln" style="top:276.55px">10</div><div class="cl" style="top:276.55px"><span class="r">  border-radius: 3em;</span></div>
<div class="ln" style="top:297.5px">11</div><div class="cl" style="top:297.5px"><span class="r">  // TODO: verify if this change is corr</span></div>
<div class="ln" style="top:318.45px">12</div><div class="cl" style="top:318.45px"><span class="r">  cursor: ${</span><span class="b">props</span><span class="w"> </span><span class="c">=&gt;</span><span class="w"> props.</span><span class="k">status</span><span class="w"> </span><span class="c">===</span><span class="w"> </span><span class="g">'p</span></div>
<div class="ln" style="top:339.4px">13</div><div class="cl" style="top:339.4px"><span class="r">  display: inline-block;</span></div>
<div class="ln" style="top:360.35px">14</div><div class="cl" style="top:360.35px"><span class="r">  overflow: hidden;</span></div>
<div class="ln" style="top:381.3px">15</div><div class="cl" style="top:381.3px"><span class="r">  position: relative;</span></div>
<div class="ln" style="top:402.25px">16</div><div class="cl" style="top:402.25px"><span class="r">  transition: ${</span><span class="b">props</span><span class="w"> </span><span class="c">=&gt;</span><span class="w"> props.</span><span class="k">status</span><span class="w"> </span><span class="c">!=</span></div>
<div class="ln" style="top:423.2px">17</div><div class="cl" style="top:423.2px"><span class="r">  transform: translate3d(0,0,0);</span></div>
<div class="ln" style="top:444.15px">18</div><div class="cl" style="top:444.15px"><span class="r">  vertical-align: top;</span></div>
<div class="ln" style="top:465.1px">19</div><div class="cl" style="top:465.1px"></div>
<div class="ln" style="top:486.05px">20</div><div class="cl" style="top:486.05px"><span class="r">  ${</span><span class="b">props</span><span class="w"> </span><span class="c">=&gt;</span><span class="w"> props.</span><span class="k">size</span><span class="w"> </span><span class="c">===</span><span class="w"> </span><span class="g">'medium'</span><span class="w"> </span><span class="c">&amp;&amp;</span></div>
<div class="ln" style="top:507.0px">21</div><div class="cl" style="top:507.0px"><span class="r">    height: 32px;</span></div>
<div class="ln" style="top:527.95px">22</div><div class="cl" style="top:527.95px"><span class="r">    width: 32px;</span></div>
<div class="ln" style="top:548.9px">23</div><div class="cl" style="top:548.9px"><span class="r">  `}</span></div>
<div class="ln" style="top:569.85px">24</div><div class="cl" style="top:569.85px"></div>
<div class="ln" style="top:590.8px">25</div><div class="cl" style="top:590.8px"><span class="r">  ${</span><span class="b">props</span><span class="w"> </span><span class="c">=&gt;</span><span class="w"> props.</span><span class="k">size</span><span class="w"> </span><span class="c">===</span><span class="w"> </span><span class="g">'small'</span><span class="w"> </span><span class="c">&amp;&amp;</span><span class="w"> </span><span class="r">c</span></div>
<div class="ln" style="top:611.75px">26</div><div class="cl" style="top:611.75px"><span class="r">    height: 20px;</span></div>
<div class="ln" style="top:632.7px">27</div><div class="cl" style="top:632.7px"><span class="r">    width: 20px;</span></div>
<div class="ln" style="top:653.65px">28</div><div class="cl" style="top:653.65px"><span class="r">  `}</span></div>
<div class="ln" style="top:674.6px">29</div><div class="cl" style="top:674.6px"></div>
<div class="ln" style="top:695.55px">30</div><div class="cl" style="top:695.55px"><span class="r">  ${</span><span class="b">props</span><span class="w"> </span><span class="c">=&gt;</span><span class="w"> props.</span><span class="k">size</span><span class="w"> </span><span class="c">===</span><span class="w"> </span><span class="g">'tiny'</span><span class="w"> </span><span class="c">&amp;&amp;</span><span class="w"> </span><span class="r">cs</span></div>
<div class="ln" style="top:716.5px">31</div><div class="cl" style="top:716.5px"><span class="r">    width: 6px;</span></div>
<div class="ln" style="top:737.45px">32</div><div class="cl" style="top:737.45px"><span class="r">    height: 6px;</span></div>
<div class="ln" style="top:758.4px">33</div><div class="cl" style="top:758.4px"><span class="r">  `}</span></div>
<div class="ln" style="top:779.35px">34</div><div class="cl" style="top:779.35px"></div>
<div class="ln" style="top:800.3px">35</div><div class="cl" style="top:800.3px"><span class="r">  ${</span><span class="b">props</span><span class="w"> </span><span class="c">=&gt;</span><span class="w"> props.</span><span class="k">status</span><span class="w"> </span><span class="c">===</span><span class="w"> </span><span class="g">'loading'</span></div>
<div class="ln" style="top:821.25px">36</div><div class="cl" style="top:821.25px"><span class="r">    animation: ${glow} 1.5s ease-in-out </span></div>
<div class="ln" style="top:842.2px">37</div><div class="cl" style="top:842.2px"><span class="r">  `}</span></div>
<div class="ln" style="top:863.15px">38</div><div class="cl" style="top:863.15px"></div>
<div class="ln" style="top:884.1px">39</div><div class="cl" style="top:884.1px"><span class="r">  /* background */</span></div>
<div class="ln" style="top:905.05px">40</div><div class="cl" style="top:905.05px"><span class="r">  ${</span><span class="b">props</span><span class="w"> </span><span class="c">=&gt;</span><span class="w"> props.</span><span class="k">status</span><span class="w"> </span><span class="c">===</span><span class="w"> </span><span class="g">'disabled'</span></div>
<div class="ln" style="top:926.0px">41</div><div class="cl" style="top:926.0px"><span class="r">    background-color: #ccc;</span></div>
<div class="ln" style="top:946.95px">42</div><div class="cl" style="top:946.95px"><span class="r">  `}</span></div>
</div>
</div>
</body>
</html>
